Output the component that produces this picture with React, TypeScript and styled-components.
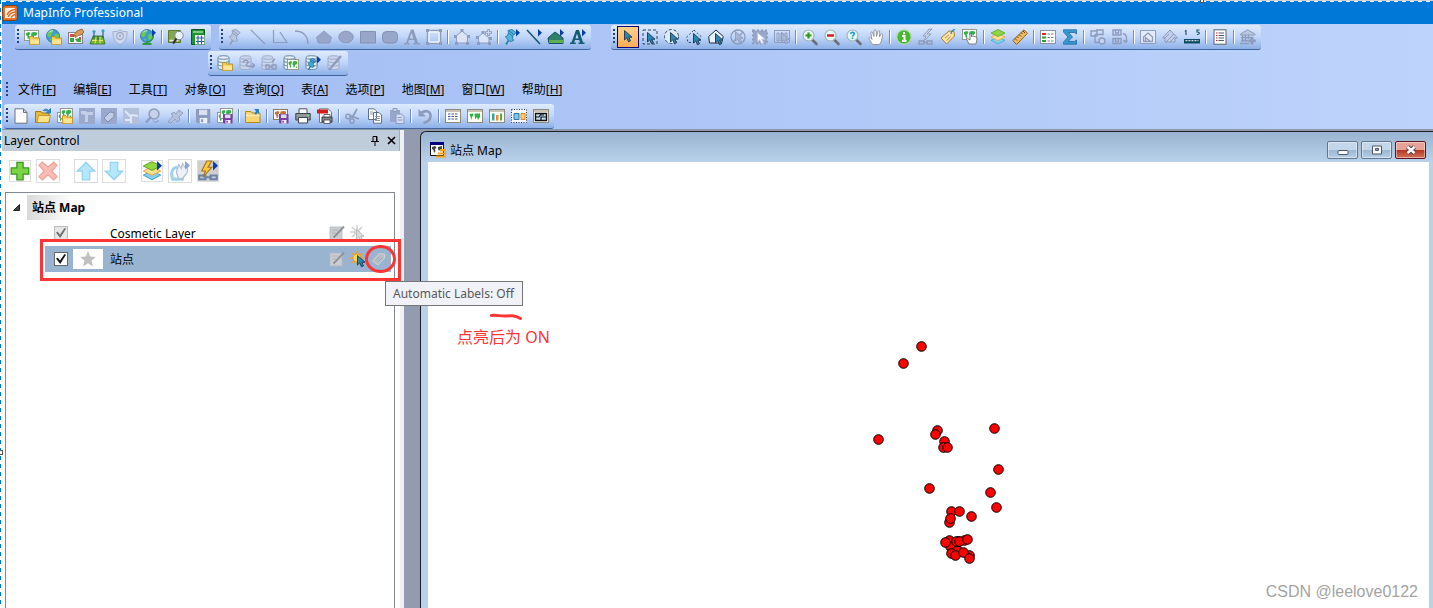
import React from 'react';
import styled, { createGlobalStyle, css } from 'styled-components';

const GlobalStyle = createGlobalStyle`
  * { box-sizing: border-box; }
  body { margin: 0; background: #fff; }
  body, button, input { font-family: "Noto Sans", "Noto Sans CJK SC", sans-serif; font-size: 12px; color: #000; }
  button { padding: 0; border: 0; background: none; }
`;

/* ---------- shared drawing parts ---------- */

const OFF = '#8d9bbd';
const OFF_FILL = '#a9b7d6';

const Folder = ({ x = 5, y = 6 }: { x?: number; y?: number }) => (
  <g transform={`translate(${x} ${y})`}>
    <path d="M.5 9.5V1.5h3.5l1 1.5h5.500v6.500z" fill="#f3c850" stroke="#b98c1c" strokeWidth=".8" />
    <path d="M1.500 9.200V4.500H10v4.700z" fill="#fde594" />
  </g>
);
const Cursor = ({ x = 6, y = 3, fill = '#2c86b4', edge = '#18384c' }: { x?: number; y?: number; fill?: string; edge?: string }) => (
  <path transform={`translate(${x} ${y})`} d="M.5.5v9.500l2.300-2.200 1.700 4 2-1-1.700-3.600h3.200z" fill={fill} stroke={edge} strokeWidth=".9" />
);
const MapPage = ({ x = 0, y = 1, map = '#31b04c', frame = '#8b9484', w = 14 }: { x?: number; y?: number; map?: string; frame?: string; w?: number }) => (
  <g transform={`translate(${x} ${y})`}>
    <rect x=".5" y=".5" width={w} height="10" fill="#fff" stroke={frame} strokeWidth=".9" />
    <g transform={`scale(${w / 14} 1)`} fill={map}>
      <path d="M2 3l3-1 1.500 1L5.500 5 4.500 5.500 5.500 7 4.500 9 3.500 8.500 3.500 6.500 2 5z" />
      <path d="M7.500 2.500l2.500-.5 3 .5v2L11.500 6l-1-.500L9.500 8.500 8.500 9 8 6.500 7 5.500z" />
      <path d="M11.500 7.500h1.500V9h-1.500z" />
    </g>
  </g>
);
const Flyout = ({ y = 0 }: { y?: number }) => <path d={`M12 ${y}v7.500l4-3.750z`} fill="#0b3fae" />;
const Disk = ({ x = 6, y = 6, fill = '#7a3fa0', s = 1 }: { x?: number; y?: number; fill?: string; s?: number }) => (
  <g transform={`translate(${x} ${y}) scale(${s})`}>
    <path d="M0 0h9.500v9.500H1L0 8.500z" fill={fill} />
    <path d="M2 .5h5.500v3.500H2z" fill="#d9dff0" />
    <path d="M2.500 6h5v3.500h-5z" fill="#eef1fa" />
    <path d="M3.300 6.800h1.500v2H3.300z" fill={fill} />
  </g>
);
const Cylinder = ({ on = false }: { on?: boolean }) => (
  <g stroke={on ? '#5c7c98' : '#9aa8c8'} fill={on ? '#e2f1f8' : '#cbd6ec'} strokeWidth=".9">
    <path d="M1 2.500v10.500c0 2 11 2 11 0V2.500" />
    <ellipse cx="6.500" cy="2.500" rx="5.500" ry="1.800" />
    <path d="M1 6c0 2 11 2 11 0M1 9.500c0 2 11 2 11 0" fill="none" />
  </g>
);
const Pin = ({ a, b }: { a: string; b: string }) => (
  <g stroke={b} strokeWidth=".9" fill={a}>
    <path d="M4.500 11.500L2 15.500" strokeWidth="1.500" />
    <path d="M1.500 7.500l2-.8 1-3L4 1.500 8 .5l4 3-1.500 2-1.500.5-.5 3 1 2.500-2 1c-3-.5-5-2.500-6-5z" />
    <path d="M4.500 4l4 3M5 2l5 3.500" fill="none" />
  </g>
);
const Magnifier = () => (
  <>
    <path d="M10 10.500l4.500 4.500" stroke="#6c7076" strokeWidth="2.600" strokeLinecap="round" />
    <circle cx="6.500" cy="6.500" r="5.500" fill="#e6f6f0" stroke="#9fb6b8" strokeWidth="1.200" />
  </>
);
const Grid = ({ children }: { children?: React.ReactNode }) => (
  <>
    <rect x=".5" y="1.500" width="15" height="13" fill="#fffef6" stroke="#8d897c" />
    <path d="M1 2h14v2H1z" fill="#c9c5b5" />
    {children}
  </>
);
const Globe = () => (
  <>
    <circle cx="7" cy="7" r="6.500" fill="#3f9ad4" stroke="#2a6c98" strokeWidth=".8" />
    <path d="M1.500 4.500c1-3 5-4 6-3S5 4 5.500 5.200 3 8.500 2 7.800 1 6 1.500 4.500zM8.500 6c1-2 4-1.500 4.500 0s-1 5-2.500 5.500S7.500 8.500 8.500 6zM3.500 9.500l2.500.5-.5 2.500z" fill="#6ccc4c" />
    <path d="M3 3.500c1.500-2 3-2 4-1.500" stroke="#c8ecf8" fill="none" />
  </>
);
const Layers = () => (
  <g strokeWidth=".8">
    <path d="M8 8l7 3.300-7 3.700-7-3.700z" fill="#7fd0ee" stroke="#4aa4cc" />
    <path d="M8 4.500l7 3.500-7 3.500L1 8z" fill="#ffe08c" stroke="#e8a440" />
    <path d="M8 .5l7 3.500-7 3.500L1 4z" fill="#8fd640" stroke="#5aa41c" />
  </g>
);

/* ---------- icon set, drawn on a 16 unit grid ---------- */

const icons: Record<string, React.ReactNode> = {
  openTable: <><MapPage /><Folder /></>,
  openWeb: <><Globe /><Folder /></>,
  tileServer: (
    <><rect x=".5" y="3.500" width="14" height="11" fill="#fff" stroke="#777" strokeWidth=".9" /><path d="M2 5h4v3H2zM11 8h2v3h-2z" fill="#e04848" /><path d="M2 9h4v4H2zM7 10l2 3h4v-1l-2-3z" fill="#35a840" />
      <path d="M5 7l4-5 5-2 2 3-3 3-3 .5-2 2-1-.5.500-2-2 2z" fill="#d99b5a" stroke="#8f5420" strokeWidth=".8" /></>
  ),
  mapPins: (
    <><path d="M0 15L3 7h10l2 8z" fill="#6cb43c" stroke="#3c6c1c" strokeWidth=".8" /><path d="M5 14.500l1-6M10 14.500V8M2 11.500h11" stroke="#f0e850" />
      <path d="M4 3v7M13 2v7M8 7v5" stroke="#234a68" /><circle cx="4" cy="2.500" r="1.600" fill="#3c9ccc" /><circle cx="13" cy="1.800" r="1.600" fill="#3c9ccc" /></>
  ),
  shield: <><path d="M1 2.500C4 3 6 2 8 .8 10 2 12 3 15 2.500c.3 7-2 10.500-7 13C3 13 .7 9.500 1 2.500z" fill="#d0daee" stroke="#a3b0cf" /><circle cx="8" cy="7" r="3.500" fill="none" stroke="#9eabca" strokeWidth="1.300" /><circle cx="8" cy="7" r="1.200" fill="#9eabca" /></>,
  globeStand: <><Globe /><path d="M12.500 4c2 4-1 9-6 9v1.500" stroke="#2d9a3c" strokeWidth="1.300" fill="none" /><path d="M2.500 15h9" stroke="#2d9a3c" strokeWidth="2" /><Flyout /></>,
  findBook: <><path d="M.5 1.500h12v12H.5z" fill="#86a650" stroke="#5a7a2c" /><path d="M1.500 11.500h9" stroke="#f0f4dc" strokeWidth="1.500" /><circle cx="11" cy="6.500" r="4.200" fill="#eaf3f6" stroke="#80888c" /><path d="M8.500 9.500L5 14.500" stroke="#33383c" strokeWidth="2.200" /></>,
  gridBook: <><path d="M1.500.5h13v15h-13z" fill="#1c9430" stroke="#0c5c1c" /><path d="M3 3h10" stroke="#c6ecc6" strokeWidth="1.200" /><path d="M5 6h9.500v9.500H5z" fill="#fff" /><path d="M6 9h8M6 12.500h8M8 6.500v9M11.500 6.500v9" stroke="#2a64a0" strokeWidth="1.200" /></>,

  pinOff: <Pin a="#bac6e0" b={OFF} />,
  lineOff: <path d="M1 1l14 14" stroke={OFF} strokeWidth="1.200" />,
  polylineOff: <path d="M1.500 1v12.500H15L8 3" stroke={OFF} strokeWidth="1.200" fill="none" />,
  arcOff: <path d="M1 2c8 0 13 5 13 13" stroke={OFF} strokeWidth="1.400" fill="none" />,
  polygonOff: <path d="M8 2l7.500 6.500-2 5.500h-11L.5 8.500z" fill="#98a6c9" stroke="#8391b6" strokeWidth=".8" />,
  ellipseOff: <ellipse cx="8" cy="8" rx="7.300" ry="5.800" fill="#98a6c9" stroke="#8391b6" strokeWidth=".8" />,
  rectOff: <path d="M.5 2.500h15v11.500H.5z" fill="#98a6c9" stroke="#8391b6" />,
  roundOff: <rect x=".5" y="2.500" width="15" height="11.500" rx="4" fill="#98a6c9" stroke="#8391b6" />,
  textOff: <path d="M7 .5h2.500L14 14h2v1.500H9.500V14h1.500l-1-3H5l-1 3h1.500v1.500H0V14h2zM7.500 4L5.700 9.500h3.700z" fill={OFF} />,
  frameOff: <><path d="M1.500 1.500h13v13h-13z" fill="none" stroke={OFF} strokeWidth="1.400" /><path d="M3 3h10v10H3z" fill="none" stroke="#eef3fc" strokeWidth="1.500" /><path d="M0 0h3v3H0zM13 0h3v3h-3zM0 13h3v3H0zM13 13h3v3h-3z" fill={OFF} /></>,
  reshapeOff: <><path d="M8 2l6 5-1 7H3L2 7z" fill="#dbe5f6" stroke={OFF} /><path d="M6.500 0h3v3h-3zM0 6h3v3H0zM13 6h3v3h-3zM1 13h3v3H1zM12 13h3v3h-3z" fill={OFF} /></>,
  addNodeOff: <><path d="M7 4l6 5v5H3L2 8z" fill="#dbe5f6" stroke={OFF} /><path d="M5.500 2h3v3h-3zM0 7h3v3H0zM13 8h3v3h-3zM1 13h3v3H1zM12 13h3v3h-3z" fill={OFF} /><path d="M12.500 0v7M9 3.500h7" stroke={OFF} strokeWidth="2.400" /><path d="M12.500 1v5M10 3.500h5" stroke="#dbe5f6" strokeWidth=".8" /></>,
  pinStyle: <><Pin a="#56b4dc" b="#1d7aa4" /><Flyout /></>,
  lineStyle: <><path d="M1 1l13 14" stroke="#12566c" strokeWidth="1.500" /><Flyout /></>,
  regionStyle: <><path d="M0 9l7-6 8 6v5.500H1z" fill="#2f8064" stroke="#14506c" /><path d="M1 11h14v3H1z" fill="#5fae50" /><Flyout /></>,
  textStyle: <><path d="M6 1h3l4 12.500h1.500V15H8.500v-1.500H10l-.8-2.500H5l-.8 2.500h1.500V15H0v-1.500h1.500zM7 4.500L5.500 9.500h3z" fill="#145c78" /><Flyout /></>,

  arrow: <Cursor x={4} y={1} />,
  marquee: <><path d="M1 1h14v14H1z" fill="none" stroke="#33445c" strokeDasharray="3 2" /><Cursor x={5} y={3} /></>,
  radius: <><circle cx="7.500" cy="7.500" r="7" fill="#dcebf8" stroke="#33445c" strokeDasharray="3 2" /><Cursor x={6} y={3} /></>,
  polySelect: <><path d="M8 1l7 6.500-2 6H2L.7 8z" fill="none" stroke="#33445c" strokeDasharray="2 2" /><Cursor x={7} y={4} /></>,
  boundary: <><path d="M8 1l7.300 6.500L13.500 14h-12L.7 7.500z" fill="#e8f3fb" stroke="#1c2c40" /><Cursor x={7} y={4} /></>,
  unselectOff: <><circle cx="8" cy="8" r="7" fill="none" stroke={OFF} strokeWidth="1.300" /><path d="M3 13L13 3" stroke={OFF} strokeWidth="1.300" /><Cursor x={5} y={2} fill={OFF_FILL} edge={OFF} /></>,
  invertOff: <><path d="M1 1.500h14v13H1z" fill="#98a6c9" stroke={OFF} strokeDasharray="2 2" strokeWidth="2" /><Cursor x={5} y={3} fill="#fff" edge="#b8c4e0" /></>,
  graphOff: <><path d="M.5 1.500h15v12H.5zM3 4h2v8H3zM7 4h2v8H7zM11 4h2v8h-2z" fill="none" stroke={OFF} /><Cursor x={7} y={3} fill={OFF_FILL} edge={OFF} /></>,
  zoomIn: <><Magnifier /><path d="M6.500 3.500v6M3.500 6.500h6" stroke="#2c9a1c" strokeWidth="2.200" /></>,
  zoomOut: <><Magnifier /><path d="M3 6.500h7" stroke="#d8181c" strokeWidth="2.400" /></>,
  zoomAsk: <><Magnifier /><path d="M4.800 5c0-2.500 3.800-2 3.500 0-.2 1.200-1.800 1-1.800 2.500M6.500 8.500v1.500" stroke="#1a9ad0" strokeWidth="1.600" fill="none" /></>,
  hand: <path d="M4.500 15.500L1 10c-.8-1.500 1-2 1.800-1L4 10.500 2.800 4c0-1.300 1.500-1.500 1.900 0L6 7.500 6 2c0-1.500 2-1.500 2.200 0l.3 5.500L10 2.500c.5-1.300 2-.8 1.800.5L11.500 8l1.500-3c.8-1 2-.2 1.600.9L13.500 12l-2 3.500z" fill="#fff" stroke="#8d9098" strokeWidth=".9" />,
  info: <><circle cx="8" cy="8" r="7.200" fill="#48b830" stroke="#b4d8ac" strokeWidth="1.300" /><path d="M8 3v2.200M6 7h2.500v4.500M6 12h4.500" stroke="#fff" strokeWidth="2" fill="none" /></>,
  hotlinkOff: <><path d="M11 0L5 7h3l-2 5 7-7H9l5-5z" fill="#c8d2e8" stroke={OFF} strokeWidth=".9" /><path d="M1 12h5v3H1zM9 12h5v3H9zM5 13.500h5" fill="none" stroke={OFF} strokeWidth="1.300" /></>,
  label: <><path d="M1 9L9 2l5 .5.500 4.500-8 8z" fill="#f8e2a4" stroke="#a4823a" /><path d="M5 9l4-3M6.500 11.500l4-3.500" stroke="#b99248" /><path d="M11 5c0-3 3-5 4-4" stroke="#2f8cc0" strokeWidth="1.300" fill="none" /></>,
  dragMap: <><MapPage y={0} w={14} /><path d="M7 15l-2.500-5c0-1 1.300-1 2 0L8 11V5.500c0-1 1.500-1 1.500 0V8l1-1 1.500.3 1 .2 1.500.8.500 1.700-.5 3-.7 2H8z" fill="#fff" stroke="#6c7076" strokeWidth=".9" /></>,
  layers: <Layers />,
  ruler: <><path d="M.8 11.500L12 .8l3.500 3.500L4.500 15.500z" fill="#ecbc64" stroke="#946018" /><path d="M3 9.500l2 2M5 7.500l1.500 1.500M7 5.500l2 2M9 3.500l1.500 1.500M11 2l2 2" stroke="#6c400c" /></>,
  legend: <><rect x=".5" y="1.500" width="15" height="13" fill="#fff" stroke="#8b93a0" /><path d="M2 4h4v2H2z" fill="#e02828" /><path d="M2 7.500h4v2H2z" fill="#28a038" /><path d="M2 11h4v2H2z" fill="#28a038" /><path d="M7.500 5H14M7.500 8.500H14M7.500 12H14" stroke="#777f8c" strokeDasharray="2.500 1" /></>,
  sum: <path d="M1.500.8h13V5l-2-1.500H6.500L10.500 8l-4.500 4.500h6.500l2-1.500v4.200h-13v-2L6 8 1.500 3z" fill="#3a98d0" stroke="#1c6ca4" strokeWidth=".8" />,
  districtOff: <><path d="M1 2h6v5H1zM5 5.500h8V1H6M5 5.500v8h4" fill="none" stroke={OFF} strokeWidth="1.400" /><circle cx="12" cy="12" r="3" fill="#c6d2ea" stroke={OFF} strokeWidth="1.400" /></>,
  assignOff: <><path d="M1 1h8v5H1zM1 9.500h8v5H1z" fill="none" stroke={OFF} strokeWidth="1.400" /><path d="M3.500 1v3h3V1M3.500 9.500v3h3v-3M11 4.500c4 1 4.500 5 2.500 8M11.500 11l2 2.500 2-2" fill="none" stroke={OFF} strokeWidth="1.300" /></>,
  clipOff: <><path d="M.5 1.500h15v13H.5z" fill="#e4ebf8" stroke={OFF} /><path d="M8 4l4.500 4v4.500h-9V8zM5.500 12V8.500L10 12" fill="none" stroke={OFF} strokeWidth="1.300" /></>,
  clipRegionOff: <><path d="M8 1l7.500 8H13v4H3V9H.5z" fill="#c2cfe8" stroke={OFF} /><path d="M4 13L12 5M8 13l5-5M3 9l4-4" stroke={OFF} /></>,
  scaleBar: <><path d="M2 1v5M1 2.500L2.300 1M15.500 1h-2.500v2c3-.3 3 2.700 0 2.500" stroke="#12506c" strokeWidth="1.100" fill="none" /><path d="M0 10h16v4.500H0z" fill="#0e4c64" /><path d="M1.500 11.700h13" stroke="#fff" strokeDasharray="2 1" /></>,
  list: <><rect x="2" y=".8" width="12" height="14.400" fill="#fff" stroke="#5c6470" /><path d="M4 4h1.500M4 6.500h1.500M4 9h1.500M4 11.500h1.500" stroke="#c02828" /><path d="M6.500 4H12M6.500 6.500H12M6.500 9H12M6.500 11.500H12" stroke="#545c68" /></>,
  bankOff: <><path d="M7.500.8L15 5v1H.5V5z" fill="#bac6e0" stroke={OFF} /><path d="M1 8.500h12M1 11.500h7M0 14.500h9M2.500 6v7M5.500 6v7M8.500 6v4" stroke={OFF} strokeWidth="1.300" /><path d="M12 8v7.500M8.300 11.800h7.500" stroke={OFF} strokeWidth="2.800" /></>,

  dbOpen: <><Cylinder on /><Folder /></>,
  dbRefreshOff: <><Cylinder /><path d="M4 7c3-4 7 0 4 2s3 4 8 1M13 8l2.500 2.500L13 13" fill="none" stroke={OFF} strokeWidth="1.400" /></>,
  dbUnlinkOff: <><Cylinder /><path d="M14 4l-3 3M5 10h3v4H5zM11 10h4v4h-4zM8 12h3" fill="none" stroke={OFF} strokeWidth="1.400" /></>,
  dbMap: <><Cylinder on /><MapPage x={4} y={4} w={11} map="#3fae3c" /></>,
  dbPin: <><Cylinder on /><g transform="translate(2 3) scale(.75)"><Pin a="#46a9d4" b="#176a92" /></g><Flyout y={1} /></>,
  dbEditOff: <><Cylinder /><path d="M2 15L14 1" stroke={OFF} strokeWidth="2.200" /></>,

  newDoc: <path d="M2 .8h8.500L14 4.500v10.700H2z M10.500.8v3.700H14" fill="#fff" stroke="#6c747c" />,
  open: <><path d="M.5 14.500V3.500H6L7 5h7v9.500z" fill="#e8b83c" stroke="#a47c14" /><path d="M2 14.500L3.500 7.500h12l-1.800 7z" fill="#fde38c" stroke="#b48c24" strokeWidth=".8" /><path d="M8 3c2-3 5-2 6 .5M15.500.5V5h-4z" stroke="#2a80c0" fill="#2a80c0" fillOpacity=".9" /></>,
  openMaps: <><MapPage y={4} w={12} /><MapPage x={3} y={0} w={12} /><Folder /></>,
  hammerOff: <><path d="M0 0h16v16H0z" fill="#9aa8cb" /><path d="M2 3h4l3 1h5v3H9v7H6V7L2 6z" fill="#c2cde6" /></>,
  tagOff: <><path d="M0 0h16v16H0z" fill="#9aa8cb" /><path d="M3 10l6-6 4 .5v4L7 14z" fill="#c2cde6" stroke="#7c8cb4" /></>,
  mapOff: <><path d="M0 0h16v16H0z" fill="#b3c0dc" /><path d="M2 3l5 5 2-1 6 1M8 8v7M2 12h5" stroke="#dfe7f5" strokeWidth="2" fill="none" /></>,
  findOff: <><circle cx="9" cy="6" r="5" fill="#c6d2ea" stroke={OFF} strokeWidth="1.500" /><path d="M6 9l-5 5.500" stroke={OFF} strokeWidth="2.300" /><path d="M8 12.500l2 2 4-2" stroke={OFF} fill="none" /></>,
  wrenchOff: <><path d="M1 14l5-6-2-2 3-2 2 2 3-4 4 3-4 4 1 3-3 2-2-3-4 4z" fill="#b4c1de" stroke={OFF} strokeWidth=".9" /></>,
  saveOff: <Disk x={1} y={1} fill={OFF} s={1.5} />,
  saveMap: <><MapPage y={4} w={12} /><MapPage x={3} y={0} w={12} /><Disk /></>,
  openFolder: <><path d="M.5 14.500V3.500H6L7 5h8v9.500z" fill="#f8d474" stroke="#b48818" /><path d="M1 7.500h13.500" stroke="#fff0b8" strokeWidth="1.500" /><path d="M9 1h5v5l-1.500-1.500L11 7 9.500 5.500 11 3z" fill="#2a80c0" /></>,
  saveTable: <><MapPage map="#c07038" frame="#8c6c48" /><Disk /></>,
  print: <><path d="M4 .8h8v5H4z" fill="#fff" stroke="#555" /><path d="M.8 5.500h14.400v6.500H.8z" fill="#9098a0" stroke="#3c444c" /><path d="M3.500 9.500h9v5.500h-9z" fill="#fff" stroke="#444" /><path d="M12 7.500h2" stroke="#6ce04c" strokeWidth="1.400" /></>,
  pdf: <><path d="M2.500.8H11L14.500 4v10.500h-12z" fill="#fff" stroke="#777" /><path d="M0 1.500h11v4H0z" fill="#d01c1c" /><path d="M5 9h10v5H5z" fill="#7c848c" stroke="#333b44" /><path d="M7 6.500h6V9H7zM7 12h6v3.500H7z" fill="#fff" stroke="#444" strokeWidth=".8" /></>,
  cutOff: <><path d="M12 1L6.500 11M5 7.500l9 3.500" stroke={OFF} strokeWidth="1.800" /><circle cx="3" cy="8.500" r="2.200" fill="none" stroke={OFF} strokeWidth="1.500" /><circle cx="7" cy="13" r="2.200" fill="none" stroke={OFF} strokeWidth="1.500" /></>,
  copy: <><path d="M1.500.8H7L9.500 3v8.500h-8zM6.500 4.500H12L14.500 7v8.200h-8z" fill="#fff" stroke="#5c7090" /><path d="M3 4h3M3 6h3M8 8.500h5M8 10.500h5M8 12.500h5" stroke="#8c9cb4" /></>,
  pasteOff: <><path d="M1 2h10v12H1z" fill="#98a6c9" /><path d="M4 .5h4v3H4z" fill="#c6d0e8" stroke={OFF} /><path d="M7 6h5.500L15 8.500v7H7z" fill="#d2dcf0" stroke={OFF} /><path d="M8.500 9.500h4M8.500 12h5" stroke={OFF} /></>,
  undoOff: <><path d="M4 5c6-4 10-1 9.500 3.500S10 14 6.500 15" fill="none" stroke={OFF} strokeWidth="2.600" /><path d="M1.500 1v7.500H9z" fill={OFF} /></>,
  browser: <Grid><path d="M3 6h10M3 8.500h10M3 11h10" stroke="#3c5c9c" strokeDasharray="2.500 1" /></Grid>,
  mapper: <Grid><path d="M2.500 6l3.500-.5.500 1.500-1.500 2L4.500 12l-1-3zM7.500 5.500h5.500V9l-2 3-1-3-2 2.500z" fill="#2fb048" /></Grid>,
  grapher: <Grid><path d="M3 5.500h2.500v7H3z" fill="#30a8a0" /><path d="M7 7h2.500v5.500H7z" fill="#f08838" /><path d="M11 5.500h2v7h-2z" fill="#48b040" /></Grid>,
  layout: <><rect x=".5" y="1.500" width="15" height="13" fill="#f6f8fc" stroke="#333" strokeDasharray="1 1.500" /><path d="M3 5.500h5v6H3z" fill="#7fc4ec" stroke="#2a78b0" /><path d="M10 5.500h4v6h-4z" fill="#ffd27a" stroke="#e08418" /></>,
  redistrict: <Grid><path d="M2.500 5.500h11v7h-11z" fill="#c2e2f0" stroke="#111" strokeWidth="1.400" /><path d="M3 9h3l2-3M8 12V9h5M8 7h3" stroke="#111" strokeWidth="1.200" fill="none" /></Grid>,

  add: <path d="M5.500 1h5v4.500H15v5h-4.500V15h-5v-4.500H1v-5h4.500z" fill="#7cd444" stroke="#3a961c" />,
  removeOff: <path d="M3.500.8L8 5 12.500.8l2.700 2.700L11 8l4.200 4.500-2.700 2.700L8 11l-4.500 4.200L.8 12.500 5 8 .8 3.500z" fill="#f8beb6" stroke="#f0a098" />,
  upOff: <path d="M8 1l7 7h-4v7H5V8H1z" fill="#b4e6fc" stroke="#94d2f0" />,
  downOff: <path d="M8 15L1 8h4V1h6v7h4z" fill="#b4e6fc" stroke="#94d2f0" />,
  layersMenu: <><Layers /><Flyout /></>,
  handMenuOff: <><path d="M2 14c-2-6 1-9 4-9M1 14.500h10" stroke="#9cd4ec" strokeWidth="2.500" fill="none" /><path d="M5 9l2-6 2 3 1-4 2 3 2-1v5l-4 5H7z" fill="#eef2f8" stroke="#b4bece" /><path d="M12 0v7l4-3.500z" fill="#8aa4dc" /></>,
  hotlinkMenu: <><path d="M1 11.500h5v3H1zM10 11.500h5v3h-5zM5 13h6" fill="none" stroke="#6884a8" strokeWidth="1.600" /><path d="M7 0L3 8h3l-2 5 7-8H8l3-5z" fill="#fcc83c" stroke="#a4741c" strokeWidth=".9" /><Flyout /></>,

  edit: <><path d="M1 2h12v13H1z" fill="#c9cdd1" stroke="#b4b8bc" strokeWidth=".8" /><path d="M3 5h6M3 8h4" stroke="#b0b4b8" /><path d="M6.500 10.500L15 1.500" stroke="#8f9397" strokeWidth="2" /><path d="M4.500 12.500l2-2" stroke="#6c7074" strokeWidth="1.200" /></>,
  selectOff: <><path d="M7 0v5M2 2l3 3M0 7h5M2 12l3-3M12 2L9 5" stroke="#d0d0d0" strokeWidth="1.600" /><circle cx="7" cy="7" r="2.500" fill="#e8e8e8" stroke="#ccc" /><Cursor x={6} y={4} fill="#dcdcdc" edge="#b4b4b4" /></>,
  selectOn: <><path d="M7 0v13M0 7h13M2 2l10 10M12 2L2 12" stroke="#f0a024" strokeWidth="1.600" /><circle cx="7" cy="7" r="4" fill="#ffd84c" stroke="#f09c1c" /><Cursor x={7} y={4} /></>,
  tag: <><path d="M1.500 10L8 2.500l5.500.500V7L7 14z" fill="#b9bfc5" stroke="#ccd2d7" /><path d="M5 9.500l4-4M7 11l4-4" stroke="#a2a8af" /></>,
};

const Glyph = styled.svg`
  display: block;
  width: 16px;
  height: 16px;
  flex: none;
  overflow: visible;
`;
const Icon = ({ name }: { name: string }) => <Glyph viewBox="0 0 16 16" aria-hidden>{icons[name]}</Glyph>;

/* ---------- application frame ---------- */

const Shell = styled.div`
  position: relative;
  display: flex;
  flex-direction: column;
  min-height: 100vh;
  padding-left: 2px;
  overflow: hidden;
  background: linear-gradient(#fff, #fff) 1px 0 / 1px 100% no-repeat,
    repeating-linear-gradient(#0078d7 0 4px, #fff 4px 8px) 0 0 / 1px 100% no-repeat, #fff;
`;
const TitleBar = styled.header`
  display: flex;
  align-items: center;
  gap: 5px;
  height: 24px;
  padding-top: 2px;
  color: #fff;
  line-height: 20px;
  background: linear-gradient(#cfd6e0, #cfd6e0) 0 0 / 100% 1px no-repeat,
    repeating-linear-gradient(90deg, #fff 0 4px, #0078d7 4px 8px) 0 1px / 100% 1px no-repeat, #0078d7;
`;
const Handle = styled.span<{ $edge: 'left' | 'top' }>`
  position: absolute;
  width: 4px;
  height: 5px;
  border: 1px solid #555;
  background: #fff;
  ${(p) => (p.$edge === 'left' ? css`left: -1px; top: 450px;` : css`left: 1200px; top: -2px;`)}
`;
const Bars = styled.div`
  display: flex;
  flex-direction: column;
  gap: 1px;
  padding-top: 1px;
  background: linear-gradient(90deg, #a0bbf3, #bdd3fb);
`;
const BarRow = styled.div<{ $indent: number }>`
  display: flex;
  height: 25px;
  padding-left: ${(p) => p.$indent}px;
`;
const Bar = styled.div<{ $after?: number }>`
  display: flex;
  align-items: center;
  padding-right: 2px;
  margin-right: ${(p) => p.$after ?? 0}px;
  border-bottom: 1px solid #41659f;
  border-radius: 3px;
  background: linear-gradient(#dfebfd, #c0d5f8 50%, #8db0e8);
`;
const Grip = styled.span`
  width: 2px;
  height: 16px;
  margin: 0 2px;
  flex: none;
  background: repeating-linear-gradient(#27417a 0 2px, transparent 2px 4px);
`;
const Tool = styled.button<{ $active?: boolean }>`
  display: flex;
  align-items: center;
  justify-content: center;
  width: 22px;
  height: 22px;
  ${(p) => p.$active && css`border: 1px solid #000080; background: linear-gradient(#ffd28c, #ffac58);`}
`;
const Divider = styled.span`
  width: 2px;
  height: 14px;
  margin: 0 2px;
  background: linear-gradient(90deg, #6a8ccb 50%, #fff 50%);
`;

const Toolbar = ({ label, items, after, active }: { label: string; items: string; after?: number; active?: string }) => (
  <Bar role="toolbar" aria-label={label} $after={after}>
    <Grip />
    {items.split(' ').map((n, i) => (n === '|' ? <Divider key={i} /> : (
      <Tool key={i} type="button" aria-label={n} $active={n === active}><Icon name={n} /></Tool>
    )))}
  </Bar>
);

const MenuBar = styled.nav`
  display: flex;
  align-items: center;
  gap: 1px;
  height: 26px;
  padding-left: 2px;
`;
const MenuItem = styled.button`
  padding: 0 8px;
  line-height: 20px;
  white-space: nowrap;
  &:first-of-type { padding-left: 7px; }
`;
const menus = [['文件', 'F'], ['编辑', 'E'], ['工具', 'T'], ['对象', 'O'], ['查询', 'Q'], ['表', 'A'], ['选项', 'P'], ['地图', 'M'], ['窗口', 'W'], ['帮助', 'H']];

/* ---------- layer control panel ---------- */

const Workspace = styled.main`
  display: flex;
  flex: 1;
  min-height: 0;
  border-top: 1px solid #8d96a8;
  background: #939bb0;
`;
const Panel = styled.aside`
  display: flex;
  flex-direction: column;
  flex: none;
  width: 402px;
  border-right: 4px solid #f0f0f0;
  background: #fff;
`;
const PanelHead = styled.div`
  display: flex;
  align-items: center;
  height: 21px;
  padding-left: 2px;
  border-right: 1px solid #a5abb5;
  background: #bfccda;
`;
const PanelTitle = styled.h2`
  flex: 1;
  margin: 0;
  font-size: 12px;
  font-weight: 400;
  line-height: 20px;
`;
const HeadButton = styled.button`
  display: grid;
  place-items: center;
  width: 16px;
  height: 18px;
`;
const PanelTools = styled.div`
  display: flex;
  align-items: center;
  height: 41px;
  padding: 0 0 2px 7px;
`;
const PanelTool = styled.button<{ $before: number; $pressed?: boolean; $off?: boolean }>`
  display: grid;
  place-items: center;
  width: ${(p) => (p.$off ? 24 : 22)}px;
  height: ${(p) => (p.$off ? 24 : 22)}px;
  margin-left: ${(p) => p.$before}px;
  border: 1px solid #dcdcdc;
  background: ${(p) => (p.$pressed ? '#cfcfcf' : '#fff')};
  svg { width: 20px; height: 20px; }
`;
const Tree = styled.div`
  flex: 1;
  width: 390px;
  margin-left: 3px;
  border: 1px solid #828790;
  border-bottom: 0;
`;
const Root = styled.div`
  display: flex;
  align-items: center;
  height: 27px;
  padding: 2px 0 0 7px;
`;
const Expander = styled.svg`
  width: 7px;
  height: 7px;
  margin-right: 7px;
`;
const RootLabel = styled.span`
  padding: 0 0 0 5px;
  width: 60px;
  font-weight: 700;
  line-height: 25px;
  white-space: nowrap;
  background: linear-gradient(90deg, #d9d9d9, #fff 80%);
`;
const LayerRow = styled.div<{ $selected?: boolean }>`
  position: relative;
  display: flex;
  align-items: center;
  height: 26px;
  margin: 0 3px 0 39px;
  padding: 0 4px 0 9px;
  gap: 5px;
  background: ${(p) => (p.$selected ? '#99b4d1' : 'transparent')};
`;
const Check = styled.input`
  appearance: none;
  width: 14px;
  height: 14px;
  margin: 0;
  border: 1px solid #666;
  background: #fff;
  &::after {
    content: '';
    display: block;
    width: 10px;
    height: 10px;
    margin: 1px;
    background: #111;
    clip-path: polygon(0 45%, 18% 38%, 40% 65%, 85% 0, 100% 8%, 42% 100%);
  }
  &:disabled { border-color: #bcbcbc; background: #e6e6e6; }
  &:disabled::after { background: #707070; }
`;
const Swatch = styled.span<{ $filled?: boolean }>`
  display: grid;
  place-items: center;
  width: 30px;
  height: 20px;
  margin-right: 2px;
  background: ${(p) => (p.$filled ? '#fff' : 'transparent')};
`;
const LayerName = styled.label`
  flex: 1;
  padding-top: 2px;
  line-height: 20px;
`;
const RowButton = styled.button`
  width: 16px;
  height: 16px;
`;
const MarkBox = styled.span`
  position: absolute;
  inset: -7px -10px -9px -5px;
  border: 3px solid #fc3434;
  pointer-events: none;
`;
const MarkRing = styled.span`
  position: absolute;
  right: -5px;
  top: -1px;
  width: 31px;
  height: 28px;
  border: 3px solid #fc3434;
  border-radius: 50%;
  pointer-events: none;
`;
const Tip = styled.span`
  position: absolute;
  left: 340px;
  top: 35px;
  z-index: 3;
  padding: 0 8px 0 7px;
  border: 1px solid #767676;
  color: #575757;
  line-height: 23px;
  white-space: nowrap;
  background: #f1f2f7;
`;
const Note = styled.div`
  position: absolute;
  left: 412px;
  top: 67px;
  z-index: 3;
  color: #fc3434;
  font-size: 16px;
  line-height: 24px;
  white-space: nowrap;
  svg { display: block; width: 34px; height: 8px; margin: 0 0 4px 33px; }
`;

/* ---------- map window ---------- */

const MapWindow = styled.section`
  display: flex;
  flex-direction: column;
  flex: 1;
  min-width: 0;
  margin: 1px 0 0 16px;
  padding: 0 4px 0 7px;
  border: solid #1d1f24;
  border-width: 1px 0 0 1px;
  border-top-left-radius: 6px;
  background: linear-gradient(#99b4d1, #b9d1ea 30px, #b9d1ea);
`;
const MapHead = styled.div`
  display: flex;
  align-items: center;
  height: 30px;
  padding: 6px 3px 0 2px;
  gap: 3px;
`;
const MapTitle = styled.h1`
  flex: 1;
  margin: 0;
  padding: 2px 0 0 1px;
  font-size: 12px;
  font-weight: 400;
  line-height: 20px;
`;
const WinButton = styled.button<{ $close?: boolean }>`
  display: grid;
  place-items: center;
  width: 31px;
  height: 18px;
  border: 1px solid ${(p) => (p.$close ? '#5c1420' : '#5f7690')};
  border-radius: 2px;
  box-shadow: inset 0 0 0 1px rgba(255, 255, 255, 0.45);
  background: ${(p) => (p.$close ? 'linear-gradient(#e6a296 0 48%, #b8361f 52%, #d0735c)' : 'linear-gradient(#c3d6ea 0 48%, #9db8d4 52%, #b6cee6)')};
  svg { width: 14px; height: 12px; }
`;
const Canvas = styled.div`
  position: relative;
  flex: 1;
  overflow: hidden;
  background: #fff;
`;
const Points = styled.svg`
  position: absolute;
  left: 0;
  top: 0;
  width: 100%;
  height: 100%;
`;
const Watermark = styled.div`
  position: absolute;
  right: 11px;
  bottom: 4px;
  color: #a3a3a3;
  font-family: "Liberation Sans", sans-serif;
  font-size: 16px;
  line-height: 24px;
`;

/* station positions in canvas units */
const stations: [number, number][] = [
  [493, 184], [475, 201], [450, 277], [509, 268], [507, 272], [566, 266], [516, 279], [515, 285], [519, 285],
  [570, 307], [501, 326], [562, 330], [568, 345], [543, 354], [523, 349], [531, 349], [521, 360], [522, 356],
  [521, 378], [522, 384], [529, 388], [530, 379], [536, 378], [517, 380], [528, 379], [531, 379], [539, 377],
  [523, 391], [541, 393], [527, 393], [535, 390], [541, 396],
];

export default function App() {
  return (
    <>
      <GlobalStyle />
      <Shell>
        <TitleBar>
          <Glyph viewBox="0 0 16 16" aria-hidden>
            <path d="M.5 4C.5 1.500 2 .5 4 .5h8c2.500 0 3.500 1.500 3.500 3.500v8c0 2.500-1.500 3.500-3.500 3.500H1z" fill="#e8742c" stroke="#8c3c0c" />
            <path d="M3 3h10v10H3z" fill="#fff4ea" />
            <path d="M5 10c1-3 4-5 8-5.500M6 12c1-2.500 4-4.500 7-5M9 12.500c1-1.500 2-2.500 4-3" stroke="#e4641c" strokeWidth="1.300" fill="none" />
          </Glyph>
          MapInfo Professional
        </TitleBar>
        <Handle $edge="left" />
        <Handle $edge="top" />
        <Bars>
          <BarRow $indent={13}>
            <Toolbar label="Tools" after={8} items="openTable openWeb tileServer mapPins shield | globeStand | findBook gridBook" />
            <Toolbar label="Drawing" after={20} items="pinOff lineOff polylineOff arcOff polygonOff ellipseOff rectOff roundOff textOff frameOff | reshapeOff addNodeOff | pinStyle lineStyle regionStyle textStyle" />
            <Toolbar label="Main" active="arrow" items="arrow marquee radius polySelect boundary unselectOff invertOff graphOff | zoomIn zoomOut zoomAsk hand | info hotlinkOff label dragMap | layers ruler | legend sum | districtOff assignOff | clipOff clipRegionOff scaleBar | list | bankOff" />
          </BarRow>
          <BarRow $indent={206}>
            <Toolbar label="DBMS" items="dbOpen dbRefreshOff dbUnlinkOff dbMap dbPin dbEditOff" />
          </BarRow>
          <MenuBar>
            <Grip />
            {menus.map(([name, key]) => <MenuItem key={key} type="button">{name}[<u>{key}</u>]</MenuItem>)}
          </MenuBar>
          <BarRow $indent={2}>
            <Toolbar label="Standard" items="newDoc open openMaps hammerOff tagOff mapOff findOff wrenchOff | saveOff saveMap | openFolder | saveTable print pdf | cutOff copy pasteOff | undoOff | browser mapper grapher layout redistrict" />
          </BarRow>
        </Bars>
        <Workspace>
          <Panel>
            <PanelHead>
              <PanelTitle>Layer Control</PanelTitle>
              <HeadButton type="button" aria-label="Pin panel">
                <svg width="8" height="10" viewBox="0 0 8 10"><path d="M2 .5h4v5H2zM0 5.500h8M4 6v4M5.500 1v4" fill="none" stroke="#000" /></svg>
              </HeadButton>
              <HeadButton type="button" aria-label="Close panel">
                <svg width="9" height="9" viewBox="0 0 9 9"><path d="M1 1l7 7M8 1L1 8" stroke="#000" strokeWidth="1.600" /></svg>
              </HeadButton>
            </PanelHead>
            <PanelTools>
              <PanelTool type="button" aria-label="Add layers" $before={0}><Icon name="add" /></PanelTool>
              <PanelTool type="button" aria-label="Remove layers" $before={5} $off><Icon name="removeOff" /></PanelTool>
              <PanelTool type="button" aria-label="Move up" $before={14} $off><Icon name="upOff" /></PanelTool>
              <PanelTool type="button" aria-label="Move down" $before={4} $off><Icon name="downOff" /></PanelTool>
              <PanelTool type="button" aria-label="Layer properties" $before={15}><Icon name="layersMenu" /></PanelTool>
              <PanelTool type="button" aria-label="Bring to view" $before={5} $off><Icon name="handMenuOff" /></PanelTool>
              <PanelTool type="button" aria-label="HotLink options" $before={5} $pressed><Icon name="hotlinkMenu" /></PanelTool>
            </PanelTools>
            <Tree>
              <Root>
                <Expander viewBox="0 0 7 7"><path d="M6.500.5v6h-6z" fill="#444" stroke="#222" /></Expander>
                <RootLabel>站点 Map</RootLabel>
              </Root>
              <LayerRow>
                <Check id="layer-cosmetic" type="checkbox" defaultChecked disabled />
                <Swatch />
                <LayerName htmlFor="layer-cosmetic">Cosmetic Layer</LayerName>
                <RowButton type="button" aria-label="Editable"><Icon name="edit" /></RowButton>
                <RowButton type="button" aria-label="Selectable"><Icon name="selectOff" /></RowButton>
                <RowButton as="span" />
              </LayerRow>
              <LayerRow $selected>
                <Check id="layer-stations" type="checkbox" defaultChecked />
                <Swatch $filled>
                  <svg width="16" height="16" viewBox="0 0 16 16"><path d="M8 0l2.200 5.600 5.800.3-4.500 3.700L13 15.500 8 12.200 3 15.500l1.500-5.900L0 5.900l5.800-.3z" fill="#c0c0c0" /></svg>
                </Swatch>
                <LayerName htmlFor="layer-stations">站点</LayerName>
                <RowButton type="button" aria-label="Editable"><Icon name="edit" /></RowButton>
                <RowButton type="button" aria-label="Selectable"><Icon name="selectOn" /></RowButton>
                <RowButton type="button" aria-label="Automatic labels"><Icon name="tag" /></RowButton>
                <MarkBox />
                <MarkRing />
                <Tip role="tooltip">Automatic Labels: Off</Tip>
                <Note>
                  <svg viewBox="0 0 34 8" aria-hidden><path d="M1.500 2.500c5-1 9 1 15 .5s9-.5 14 2.500" fill="none" stroke="#fc3434" strokeWidth="3" strokeLinecap="round" /></svg>
                  点亮后为 ON
                </Note>
              </LayerRow>
            </Tree>
          </Panel>
          <MapWindow>
            <MapHead>
              <Glyph viewBox="0 0 16 16" aria-hidden>
                <path d="M.5.5h13v13H.5z" fill="#fff" stroke="#111" />
                <path d="M0 0h14v3H0z" fill="#00007c" />
                <path d="M2 5l3-1 1.500 1L5 7.500 5.500 9 4 11 3.500 8 2 7zM8 5l4-1v3l-2 .5L9 9 8 7z" fill="#444" />
                <path d="M10 7h6v2.500h-6zM8 10.500h8v2H8zM6 13.500h10v2H6z" fill="#f8a010" />
              </Glyph>
              <MapTitle>站点 Map</MapTitle>
              <WinButton type="button" aria-label="Minimize"><svg viewBox="0 0 14 12"><rect x="2" y="6.500" width="10" height="4" rx="1" fill="#fff" stroke="#4c5666" /></svg></WinButton>
              <WinButton type="button" aria-label="Maximize"><svg viewBox="0 0 14 12"><path d="M2.500 2h9v8h-9z" fill="#fff" stroke="#4c5666" /><path d="M5.500 4.500h3v2h-3z" fill="#8ca8c4" stroke="#4c5666" /></svg></WinButton>
              <WinButton type="button" aria-label="Close" $close><svg viewBox="0 0 14 12"><path d="M3.500 3l7 6M10.500 3l-7 6" stroke="#4c4450" strokeWidth="4.400" /><path d="M3.500 3l7 6M10.500 3l-7 6" stroke="#fff" strokeWidth="2.400" /></svg></WinButton>
            </MapHead>
            <Canvas>
              <Points aria-label="Stations">
                {stations.map(([x, y], i) => <circle key={i} cx={x + 0.5} cy={y + 0.5} r="4.800" fill="#f00" stroke="#000" />)}
              </Points>
              <Watermark>CSDN @leelove0122</Watermark>
            </Canvas>
          </MapWindow>
        </Workspace>
      </Shell>
    </>
  );
}
